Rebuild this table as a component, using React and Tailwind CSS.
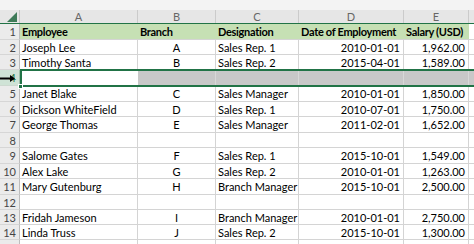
import React from 'react';

const cols = [
  { w: 'w-[118px]', align: 'justify-start pl-[2px]' },
  { w: 'w-[78px]', align: 'justify-center' },
  { w: 'w-[83px]', align: 'justify-start pl-[2px]' },
  { w: 'w-[105px]', align: 'justify-end pr-[3px]' },
  { w: 'w-[65px]', align: 'justify-end pr-[3px]' },
];

const rows = [
  { n: 1, h: 'h-4', head: true, cells: ['Employee', 'Branch', 'Designation', 'Date of Employment', 'Salary (USD)'] },
  { n: 2, h: 'h-[15px]', cells: ['Joseph Lee', 'A', 'Sales Rep. 1', '2010-01-01', '1,962.00'] },
  { n: 3, h: 'h-[15px]', cells: ['Timothy Santa', 'B', 'Sales Rep. 2', '2015-04-01', '1,589.00'] },
  { n: 4, h: 'h-4', selected: true, cells: ['', '', '', '', ''] },
  { n: 5, h: 'h-4', cells: ['Janet Blake', 'C', 'Sales Manager', '2010-01-01', '1,850.00'] },
  { n: 6, h: 'h-[15px]', cells: ['Dickson WhiteField', 'D', 'Sales Rep. 1', '2010-07-01', '1,750.00'] },
  { n: 7, h: 'h-4', cells: ['George Thomas', 'E', 'Sales Manager', '2011-02-01', '1,652.00'] },
  { n: 8, h: 'h-[15px]', cells: ['', '', '', '', ''] },
  { n: 9, h: 'h-4', cells: ['Salome Gates', 'F', 'Sales Rep. 1', '2015-10-01', '1,549.00'] },
  { n: 10, h: 'h-[15px]', cells: ['Alex Lake', 'G', 'Sales Rep. 2', '2010-01-01', '1,263.00'] },
  { n: 11, h: 'h-4', cells: ['Mary Gutenburg', 'H', 'Branch Manager', '2015-10-01', '2,500.00'] },
  { n: 12, h: 'h-[15px]', cells: ['', '', '', '', ''] },
  { n: 13, h: 'h-[15px]', cells: ['Fridah Jameson', 'I', 'Branch Manager', '2010-01-01', '2,750.00'] },
  { n: 14, h: 'h-[15px]', cells: ['Linda Truss', 'J', 'Sales Rep. 2', '2015-10-01', '1,300.00'] },
  // row 15 only peeks in at the bottom edge, its number is out of view
  { n: '', h: 'h-[15px]', cells: ['', '', '', '', ''] },
];

function Arrow() {
  return (
    <svg width="16" height="9" viewBox="0 0 16 9" className="absolute left-0 top-[4px]">
      <path d="M0 4.5H12" stroke="#000" strokeWidth="2" />
      <path d="M10 1L15 4.5L10 8Z" fill="#000" />
    </svg>
  );
}

function Row({ row }) {
  if (row.selected) {
    return (
      <div className={`flex ${row.h} relative`}>
        <div className="w-5 shrink-0 bg-[#cfe3d6] border-r border-[#9fbfaa] border-b border-b-[#cdd9d0] flex items-center justify-end pr-[3px] text-[11px] text-[#217346] relative">
          4
          <Arrow />
        </div>
        <div className="flex-1 flex border-y-2 border-[#217346] -my-px relative">
          <div className="w-[118px] shrink-0 bg-white border-l-2 border-[#217346]"></div>
          <div className="w-[78px] shrink-0 bg-[#c8c8c8] border-r border-[#d8d8d8]"></div>
          <div className="w-[83px] shrink-0 bg-[#c8c8c8] border-r border-[#d8d8d8]"></div>
          <div className="w-[105px] shrink-0 bg-[#c8c8c8] border-r border-[#d8d8d8]"></div>
          <div className="w-[65px] shrink-0 bg-[#c8c8c8] border-r border-[#d8d8d8]"></div>
          <div className="flex-1 bg-[#c8c8c8]"></div>
          <div className="absolute left-[-2px] bottom-[-4px] w-[5px] h-[5px] bg-[#217346] border border-white"></div>
        </div>
      </div>
    );
  }
  return (
    <div className={`flex ${row.h}`}>
      <div className="w-5 shrink-0 bg-[#ebebeb] border-r border-[#bdbdbd] border-b border-b-[#d6d6d6] flex items-center justify-end pr-[3px] text-[11px] text-[#444]">
        {row.n}
      </div>
      {row.cells.map((c, i) => (
        <div
          key={i}
          className={`${cols[i].w} shrink-0 flex items-center border-b border-[#d4d4d4] ${
            row.head
              ? 'justify-start pl-[2px] bg-[#c6e0b4] font-bold tracking-[-0.3px]'
              : `${cols[i].align} border-r`
          } text-[11px] text-black whitespace-nowrap`}
        >
          {c}
        </div>
      ))}
      <div className="flex-1 border-b border-[#d4d4d4]"></div>
    </div>
  );
}

export default function App() {
  return (
    <div className="w-[474px] h-[244px] overflow-hidden bg-white font-['Lato','Liberation_Sans',sans-serif] leading-none">
      <div className="h-[10px] bg-[#f3f3f3]"></div>
      <div className="flex h-[13px] bg-[#e6e6e6] text-[11px] text-[#666]">
        <div className="w-5 shrink-0 relative border-r border-[#c8c8c8]">
          <svg width="10" height="10" viewBox="0 0 10 10" className="absolute right-[2px] bottom-[1px]">
            <path d="M10 0V10H0Z" fill="#3e7a58" />
          </svg>
        </div>
        {['A', 'B', 'C', 'D', 'E'].map((l, i) => (
          <div key={l} className={`${cols[i].w} shrink-0 flex items-center justify-center border-r border-[#cbcbcb]`}>
            {l}
          </div>
        ))}
        <div className="flex-1"></div>
      </div>
      <div className="h-px bg-[#217346]"></div>
      {rows.map((r, i) => (
        <Row key={i} row={r} />
      ))}
    </div>
  );
}
